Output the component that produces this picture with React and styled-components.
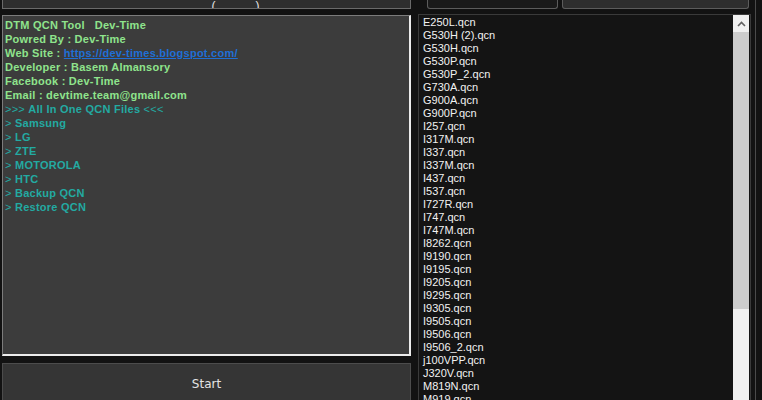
import styled, { createGlobalStyle } from "styled-components";

const GlobalStyle = createGlobalStyle`
    html, body {
        margin: 0;
        padding: 0;
        background: #121212;
        overflow: hidden;
    }
`;

const Screen = styled.div`
    display: flex;
    width: 762px;
    height: 400px;
    background: #121212;
    overflow: hidden;
`;

const LeftColumn = styled.div`
    display: flex;
    flex-direction: column;
    width: 409px;
    margin-left: 2px;
`;

const TopBar = styled.div`
    height: 8px;
    flex-shrink: 0;
    border: 1px solid #6a6a6a;
    border-top: 0;
    background: #2e2e2e;
    display: flex;
    align-items: flex-end;
    justify-content: center;
    overflow: hidden;
    font-family: "Liberation Sans", sans-serif;
    font-size: 12px;
    color: #e6e6e6;
    line-height: 14px;
`;

const TopBarLabel = styled.span`
    margin-bottom: -5px;
    margin-left: 58px;
    white-space: pre;
`;

const InfoBox = styled.div`
    margin-top: 6px;
    height: 341px;
    flex-shrink: 0;
    box-sizing: border-box;
    background: #3c3c3c;
    border-top: 1px solid #7c7c7c;
    border-left: 1px solid #7c7c7c;
    border-right: 2px solid #ececec;
    border-bottom: 2px solid #ececec;
    padding: 2px 0 0 2px;
    font-family: "Liberation Sans", Arial, sans-serif;
    font-size: 11px;
    font-weight: bold;
    letter-spacing: 0.25px;
    line-height: 14px;
`;

const Line = styled.div`
    color: ${p => (p.$tone === "cyan" ? "#23aaa2" : "#8fe48c")};
    white-space: pre;
`;

const Thin = styled.span`
    font-weight: normal;
`;

const SiteLink = styled.a`
    color: #1f6fd6;
    text-decoration: underline;
`;

const StartButton = styled.button`
    margin-top: 7px;
    height: 42px;
    flex-shrink: 0;
    background: #353535;
    border: 1px solid #4c4c4c;
    color: #e4e4e4;
    font-family: "DejaVu Sans", sans-serif;
    font-size: 12px;
    padding: 0;
`;

const RightColumn = styled.div`
    display: flex;
    flex-direction: column;
    margin-left: 7px;
    width: 333px;
`;

const ComboRow = styled.div`
    display: flex;
    gap: 4px;
    height: 9px;
    padding-left: 9px;
    padding-right: 2px;
`;

const Combo = styled.div`
    width: ${p => p.$w}px;
    box-sizing: border-box;
    height: 9px;
    border: 1px solid #5c5c5c;
    border-top: 0;
    border-radius: 0 0 3px 3px;
    background: ${p => (p.$filled ? "#2e2e2e" : "#1a1a1a")};
`;

const ListBox = styled.div`
    margin-top: 5px;
    flex: 1;
    display: flex;
    border: 1px solid #3a3a3a;
    border-bottom: 0;
    background: #141414;
    overflow: hidden;
`;

const Items = styled.div`
    flex: 1;
    padding: 1px 0 0 4px;
    font-family: "Liberation Sans", Tahoma, sans-serif;
    font-size: 11px;
    line-height: 13px;
    color: #f2f2f2;
`;

const Scrollbar = styled.div`
    width: 16px;
    margin-right: 1px;
    display: flex;
    flex-direction: column;
    background: #f0f0f0;
`;

const ArrowButton = styled.div`
    height: 17px;
    display: flex;
    align-items: center;
    justify-content: center;
    background: #f0f0f0;
`;

const Thumb = styled.div`
    height: 277px;
    background: #cdcdcd;
`;

const Edge = styled.div`
    margin-left: 4px;
    width: 1px;
    background: #4a4a4a;
`;

const files = [
    "E250L.qcn", "G530H (2).qcn", "G530H.qcn", "G530P.qcn", "G530P_2.qcn",
    "G730A.qcn", "G900A.qcn", "G900P.qcn", "I257.qcn", "I317M.qcn",
    "I337.qcn", "I337M.qcn", "I437.qcn", "I537.qcn", "I727R.qcn",
    "I747.qcn", "I747M.qcn", "I8262.qcn", "I9190.qcn", "I9195.qcn",
    "I9205.qcn", "I9295.qcn", "I9305.qcn", "I9505.qcn", "I9506.qcn",
    "I9506_2.qcn", "j100VPP.qcn", "J320V.qcn", "M819N.qcn", "M919.qcn",
];

const brands = ["Samsung", "LG", "ZTE", "MOTOROLA", "HTC", "Backup QCN", "Restore QCN"];

export default function App() {
    return (
        <>
            <GlobalStyle />
            <Screen>
                <LeftColumn>
                    <TopBar><TopBarLabel>(            )</TopBarLabel></TopBar>
                    <InfoBox>
                        <Line>DTM QCN Tool   Dev-Time</Line>
                        <Line>Powred By : Dev-Time</Line>
                        <Line>Web Site : <SiteLink href="#">https://dev-times.blogspot.com/</SiteLink></Line>
                        <Line>Developer : Basem Almansory</Line>
                        <Line>Facebook : Dev-Time</Line>
                        <Line>Email : devtime.team@gmail.com</Line>
                        <Line $tone="cyan"><Thin>&gt;&gt;&gt; </Thin>All In One QCN Files <Thin>&lt;&lt;&lt;</Thin></Line>
                        {brands.map(b => (
                            <Line key={b} $tone="cyan"><Thin>&gt; </Thin>{b}</Line>
                        ))}
                    </InfoBox>
                    <StartButton>Start</StartButton>
                </LeftColumn>

                <RightColumn>
                    <ComboRow>
                        <Combo $w={131} />
                        <Combo $w={188} $filled />
                    </ComboRow>
                    <ListBox>
                        <Items>
                            {files.map(f => <div key={f}>{f}</div>)}
                        </Items>
                        <Scrollbar>
                            <ArrowButton>
                                <svg width="9" height="6" viewBox="0 0 9 6">
                                    <path d="M1 5 L4.5 1.5 L8 5" fill="none" stroke="#606060" strokeWidth="1.6" />
                                </svg>
                            </ArrowButton>
                            <Thumb />
                        </Scrollbar>
                    </ListBox>
                </RightColumn>
                <Edge />
            </Screen>
        </>
    );
}
